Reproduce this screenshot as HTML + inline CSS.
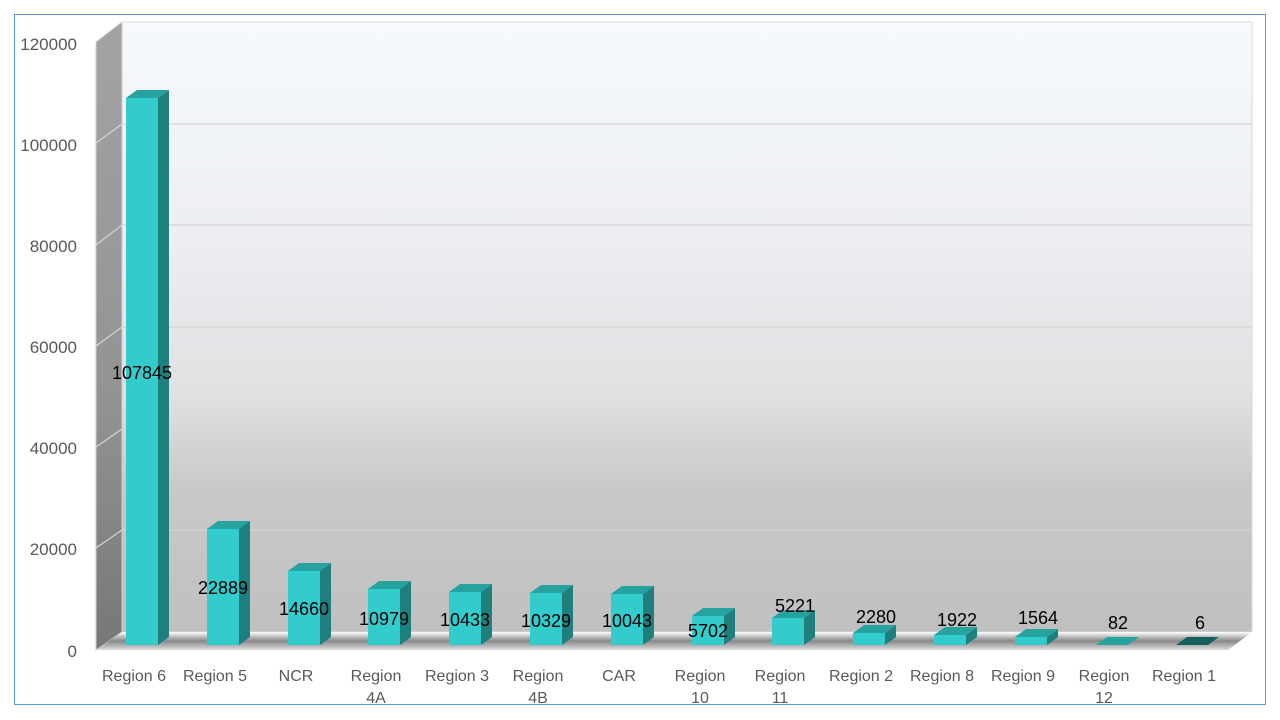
<!DOCTYPE html>
<html><head><style>
html,body{margin:0;padding:0;background:#fff;}
svg{display:block;font-family:"Liberation Sans",sans-serif;}
</style></head><body>
<svg width="1280" height="720" viewBox="0 0 1280 720">
<defs>
<linearGradient id="wall" x1="0" y1="0" x2="0" y2="1">
<stop offset="0" stop-color="#f7fafd"/>
<stop offset="0.35" stop-color="#eceef1"/>
<stop offset="0.62" stop-color="#e0e0e2"/>
<stop offset="0.76" stop-color="#c9c9c9"/>
<stop offset="1" stop-color="#c0c0c0"/>
</linearGradient>
<linearGradient id="lw" x1="0" y1="0" x2="0" y2="1">
<stop offset="0" stop-color="#a3a3a3"/>
<stop offset="0.6" stop-color="#939393"/>
<stop offset="1" stop-color="#777"/>
</linearGradient>
<linearGradient id="fl" x1="0" y1="0" x2="0" y2="1">
<stop offset="0" stop-color="#fff"/>
<stop offset="0.5" stop-color="#888"/>
<stop offset="1" stop-color="#ddd"/>
</linearGradient>
</defs>
<rect x="14.5" y="14.5" width="1251" height="690" fill="#fff" stroke="#5b9bd5" stroke-width="1"/>
<polygon points="122,22 1252,22 1252,632 122,632" fill="url(#wall)" stroke="#d9d9d9"/>
<polygon points="96,42 122,22 122,632 96,650" fill="url(#lw)" stroke="#d0d0d0"/>
<g stroke="#d4d4d4" stroke-width="1.2">
<line x1="122" y1="124" x2="1252" y2="124"/><line x1="122" y1="225" x2="1252" y2="225"/>
<line x1="122" y1="327" x2="1252" y2="327"/><line x1="122" y1="429" x2="1252" y2="429"/>
<line x1="122" y1="530" x2="1252" y2="530"/>
<line x1="96" y1="143" x2="122" y2="124"/><line x1="96" y1="245" x2="122" y2="225"/>
<line x1="96" y1="346" x2="122" y2="327"/><line x1="96" y1="447" x2="122" y2="429"/>
<line x1="96" y1="548" x2="122" y2="530"/>
</g>
<polygon points="122,632 1252,632 1228,650 96,650" fill="url(#fl)"/>
<g font-size="17" fill="#595959" text-anchor="end">
<text x="77" y="50">120000</text><text x="77" y="151">100000</text><text x="77" y="252">80000</text>
<text x="77" y="353">60000</text><text x="77" y="454">40000</text><text x="77" y="555">20000</text><text x="77" y="657">0</text>
</g>
<g font-size="18" text-anchor="middle">
<g transform="translate(126,0)"><polygon points="32,98 43,90 43,637 32,645" fill="#1f7f7c"/><polygon points="0,98 11,90 43,90 32,98" fill="#26a2a0"/><rect x="0" y="98" width="32" height="547" fill="#33cccc"/><text x="16" y="379">107845</text><text x="8" y="681" font-size="16" fill="#595959">Region 6</text></g>
<g transform="translate(207,0)"><polygon points="32,529 43,521 43,637 32,645" fill="#1f7f7c"/><polygon points="0,529 11,521 43,521 32,529" fill="#26a2a0"/><rect x="0" y="529" width="32" height="116" fill="#33cccc"/><text x="16" y="594">22889</text><text x="8" y="681" font-size="16" fill="#595959">Region 5</text></g>
<g transform="translate(288,0)"><polygon points="32,571 43,563 43,637 32,645" fill="#1f7f7c"/><polygon points="0,571 11,563 43,563 32,571" fill="#26a2a0"/><rect x="0" y="571" width="32" height="74" fill="#33cccc"/><text x="16" y="615">14660</text><text x="8" y="681" font-size="16" fill="#595959">NCR</text></g>
<g transform="translate(368,0)"><polygon points="32,589 43,581 43,637 32,645" fill="#1f7f7c"/><polygon points="0,589 11,581 43,581 32,589" fill="#26a2a0"/><rect x="0" y="589" width="32" height="56" fill="#33cccc"/><text x="16" y="625">10979</text><text x="8" y="681" font-size="16" fill="#595959">Region</text><text x="8" y="703" font-size="16" fill="#595959">4A</text></g>
<g transform="translate(449,0)"><polygon points="32,592 43,584 43,637 32,645" fill="#1f7f7c"/><polygon points="0,592 11,584 43,584 32,592" fill="#26a2a0"/><rect x="0" y="592" width="32" height="53" fill="#33cccc"/><text x="16" y="626">10433</text><text x="8" y="681" font-size="16" fill="#595959">Region 3</text></g>
<g transform="translate(530,0)"><polygon points="32,593 43,585 43,637 32,645" fill="#1f7f7c"/><polygon points="0,593 11,585 43,585 32,593" fill="#26a2a0"/><rect x="0" y="593" width="32" height="52" fill="#33cccc"/><text x="16" y="627">10329</text><text x="8" y="681" font-size="16" fill="#595959">Region</text><text x="8" y="703" font-size="16" fill="#595959">4B</text></g>
<g transform="translate(611,0)"><polygon points="32,594 43,586 43,637 32,645" fill="#1f7f7c"/><polygon points="0,594 11,586 43,586 32,594" fill="#26a2a0"/><rect x="0" y="594" width="32" height="51" fill="#33cccc"/><text x="16" y="627">10043</text><text x="8" y="681" font-size="16" fill="#595959">CAR</text></g>
<g transform="translate(692,0)"><polygon points="32,616 43,608 43,637 32,645" fill="#1f7f7c"/><polygon points="0,616 11,608 43,608 32,616" fill="#26a2a0"/><rect x="0" y="616" width="32" height="29" fill="#33cccc"/><text x="16" y="637">5702</text><text x="8" y="681" font-size="16" fill="#595959">Region</text><text x="8" y="703" font-size="16" fill="#595959">10</text></g>
<g transform="translate(772,0)"><polygon points="32,618 43,610 43,637 32,645" fill="#1f7f7c"/><polygon points="0,618 11,610 43,610 32,618" fill="#26a2a0"/><rect x="0" y="618" width="32" height="27" fill="#33cccc"/><text x="23" y="612">5221</text><text x="8" y="681" font-size="16" fill="#595959">Region</text><text x="8" y="703" font-size="16" fill="#595959">11</text></g>
<g transform="translate(853,0)"><polygon points="32,633 43,625 43,637 32,645" fill="#1f7f7c"/><polygon points="0,633 11,625 43,625 32,633" fill="#26a2a0"/><rect x="0" y="633" width="32" height="12" fill="#33cccc"/><text x="23" y="623">2280</text><text x="8" y="681" font-size="16" fill="#595959">Region 2</text></g>
<g transform="translate(934,0)"><polygon points="32,635 43,627 43,637 32,645" fill="#1f7f7c"/><polygon points="0,635 11,627 43,627 32,635" fill="#26a2a0"/><rect x="0" y="635" width="32" height="10" fill="#33cccc"/><text x="23" y="626">1922</text><text x="8" y="681" font-size="16" fill="#595959">Region 8</text></g>
<g transform="translate(1015,0)"><polygon points="32,637 43,629 43,637 32,645" fill="#1f7f7c"/><polygon points="0,637 11,629 43,629 32,637" fill="#26a2a0"/><rect x="0" y="637" width="32" height="8" fill="#33cccc"/><text x="23" y="624">1564</text><text x="8" y="681" font-size="16" fill="#595959">Region 9</text></g>
<g transform="translate(1096,0)"><polygon points="0,645 11,637 43,637 32,645" fill="#26a2a0"/><text x="22" y="629">82</text><text x="8" y="681" font-size="16" fill="#595959">Region</text><text x="8" y="703" font-size="16" fill="#595959">12</text></g>
<g transform="translate(1176,0)"><polygon points="0,645 11,637 43,637 32,645" fill="#15605e"/><text x="24" y="629">6</text><text x="8" y="681" font-size="16" fill="#595959">Region 1</text></g>
</g>
</svg>
</body></html>
